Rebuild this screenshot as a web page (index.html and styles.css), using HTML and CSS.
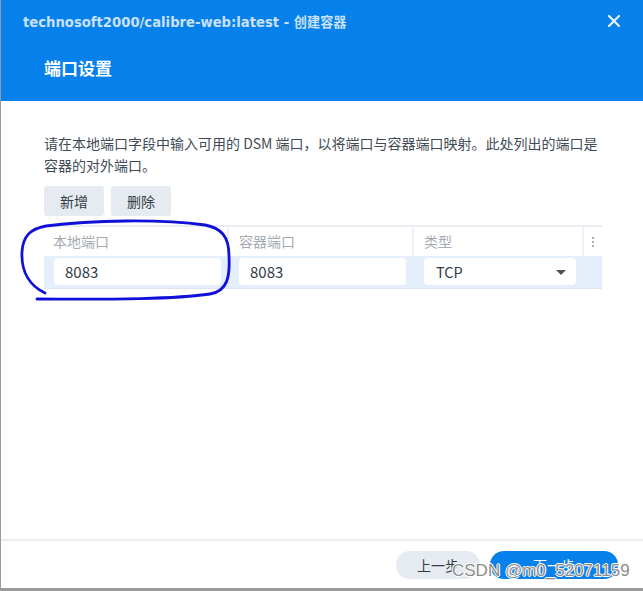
FILE: index.html
```html
<!DOCTYPE html>
<html lang="zh">
<head>
<meta charset="utf-8">
<title>创建容器</title>
<link rel="stylesheet" href="styles.css">
</head>
<body>
<div class="dialog">
  <header class="head">
    <div class="titlebar">
      <span class="title">technosoft2000/calibre-web:latest - 创建容器</span>
      <span class="close">
        <svg width="12" height="12" viewBox="0 0 12 12"><path d="M1 1L11 11M11 1L1 11" stroke="#e8f1fb" stroke-width="2.2" stroke-linecap="round"/></svg>
      </span>
    </div>
    <h1 class="step">端口设置</h1>
  </header>
  <main class="body">
    <p class="desc">请在本地端口字段中输入可用的 DSM 端口，以将端口与容器端口映射。此处列出的端口是容器的对外端口。</p>
    <div class="toolbar">
      <button class="tbtn">新增</button>
      <button class="tbtn">删除</button>
    </div>
    <div class="grid">
      <div class="hrow">
        <div class="hcell c1">本地端口</div>
        <div class="hcell c2">容器端口</div>
        <div class="hcell c3">类型</div>
        <div class="hcell c4"><span class="dots"><i></i><i></i><i></i></span></div>
      </div>
      <div class="brow">
        <div class="bcell c1"><div class="field">8083</div></div>
        <div class="bcell c2"><div class="field">8083</div></div>
        <div class="bcell c3"><div class="field sel">TCP<span class="caret"></span></div></div>
        <div class="bcell c4"></div>
      </div>
    </div>
  </main>
  <footer class="foot">
    <button class="fbtn prev">上一步</button>
    <button class="fbtn next">下一步</button>
  </footer>
</div>
<svg class="scribble" width="643" height="591" viewBox="0 0 643 591">
  <path d="M45,293 C30,286 21,272 22,252 C23,236 30,229 46,226 C92,220 160,219 205,225 C221,228 229,236 229,256 C230,276 228,291 210,294 C170,300 92,299 37,299" fill="none" stroke="#1010d8" stroke-width="2.8" stroke-linecap="round"/>
</svg>
<div class="watermark">CSDN @m0_52071159</div>
</body>
</html>
```
FILE: styles.css
```css
html, body {
  margin: 0;
  padding: 0;
}
body {
  width: 643px;
  height: 591px;
  overflow: hidden;
  position: relative;
  background: #9a9a9a;
  font-family: "Noto Sans CJK SC", "Noto Sans", sans-serif;
}
.dialog {
  width: 642px;
  height: 588px;
  margin-left: 1px;
  background: #ffffff;
  display: flex;
  flex-direction: column;
}
.head {
  background: #0680ea;
  height: 101px;
  box-sizing: border-box;
  padding: 0 0 0 22px;
  display: flex;
  flex-direction: column;
}
.titlebar {
  height: 42px;
  display: flex;
  align-items: center;
  justify-content: space-between;
}
.title {
  font-family: "DejaVu Sans", "Noto Sans CJK SC", sans-serif;
  font-weight: bold;
  font-size: 13.2px;
  color: #c9e1fa;
  letter-spacing: 0;
}
.close {
  width: 12px;
  height: 12px;
  margin-right: 23px;
  display: flex;
}
.step {
  margin: 4px 0 0 21px;
  font-size: 17px;
  font-weight: bold;
  color: #ffffff;
  line-height: 44px;
}
.body {
  flex: 1;
  padding: 0 38px 0 43px;
}
.desc {
  margin: 31px 0 0 0;
  font-size: 14px;
  line-height: 22px;
  color: #414b55;
}
.toolbar {
  display: flex;
  gap: 7px;
  margin-top: 10px;
}
.tbtn {
  font-family: inherit;
  font-size: 14px;
  color: #333c46;
  background: #e6ebf1;
  border: none;
  border-radius: 3px;
  width: 60px;
  height: 30px;
  padding: 0;
}
.grid {
  margin-top: 9px;
  width: 558px;
  border-top: 2px solid #e8edf2;
}
.hrow, .brow {
  display: flex;
}
.hrow {
  height: 29px;
}
.c1 { width: 185px; }
.c2 { width: 185px; }
.c3 { width: 170px; }
.c4 { width: 18px; }
.hcell {
  box-sizing: border-box;
  border-right: 2px solid #edf1f5;
  font-size: 14px;
  color: #a5abb2;
  padding-left: 9px;
  line-height: 29px;
}
.hcell.c2, .hcell.c3 { padding-left: 10px; }
.hcell.c4 { border-right: none; padding-left: 0; display: flex; justify-content: center; align-items: center; }
.dots {
  display: flex;
  flex-direction: column;
  gap: 2px;
}
.dots i {
  display: block;
  width: 2px;
  height: 2px;
  background: #8d949b;
  border-radius: 1px;
}
.brow {
  height: 32px;
  background: #e4effb;
  border-bottom: 1px solid #dbe6f2;
}
.bcell {
  box-sizing: border-box;
  padding: 2px 8px 0 10px;
}
.field {
  height: 27px;
  background: #ffffff;
  border-radius: 4px;
  box-sizing: border-box;
  padding-left: 11px;
  font-size: 15px;
  line-height: 27px;
  color: #333c46;
  position: relative;
}
.sel {
  padding-left: 12px;
  font-size: 14.5px;
}
.caret {
  position: absolute;
  right: 10px;
  top: 12px;
  width: 0;
  height: 0;
  border-left: 5px solid transparent;
  border-right: 5px solid transparent;
  border-top: 5px solid #4a525a;
}
.foot {
  height: 49px;
  border-top: 2px solid #e8edf2;
  display: flex;
  justify-content: flex-end;
  align-items: flex-start;
  gap: 10px;
  padding: 10px 25px 0 0;
  box-sizing: border-box;
}
.fbtn {
  font-family: inherit;
  font-size: 14px;
  height: 28px;
  border: none;
  border-radius: 14px;
  padding: 0;
}
.prev {
  width: 84px;
  background: #e6ebf1;
  color: #333c46;
}
.next {
  width: 128px;
  background: #0680ea;
  color: #ffffff;
}
.scribble {
  position: absolute;
  left: 0;
  top: 0;
  pointer-events: none;
}
.watermark {
  position: absolute;
  left: 452px;
  top: 561px;
  font-family: "Liberation Sans", Arial, sans-serif;
  font-size: 17px;
  color: #8c8c8c;
  text-shadow: 0 0 1px #fff, 1px 0 0 #fff, -1px 0 0 #fff, 0 1px 0 #fff, 0 -1px 0 #fff;
}
```
